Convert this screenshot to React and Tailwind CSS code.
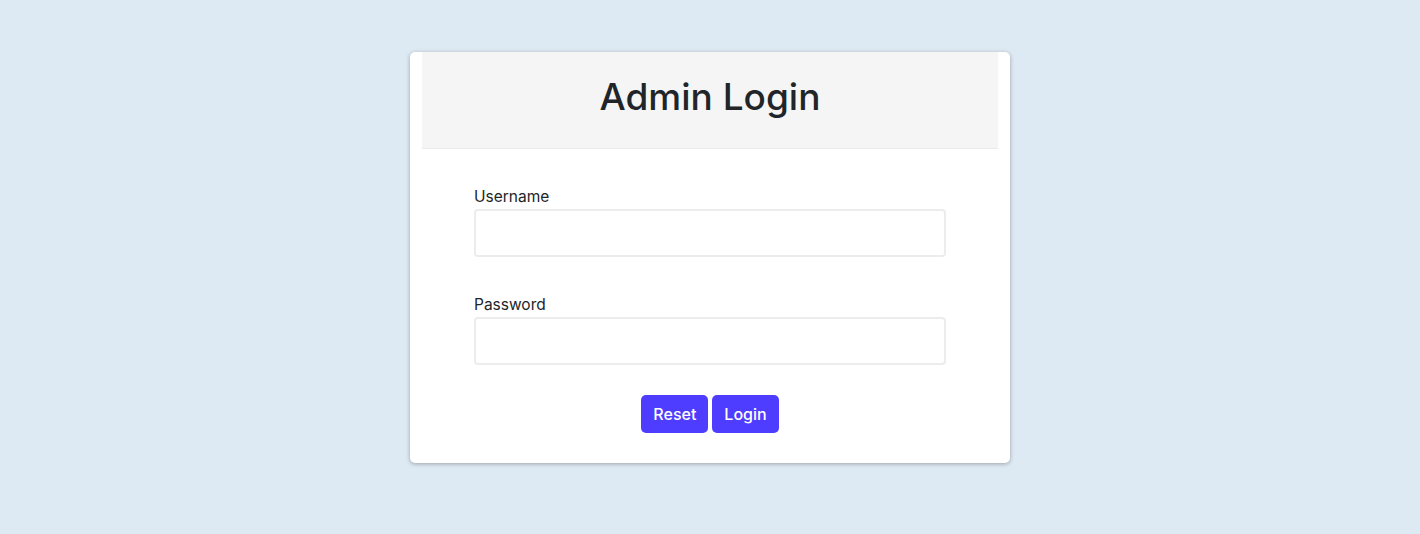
export default function App() {
  return (
    <div className="min-h-[534px] bg-[#dde9f3] flex justify-center pt-[52px] font-['Inter','Liberation_Sans',sans-serif]">
      <div className="w-[600px] h-[411px] bg-white rounded-[5px] shadow-[0_1px_4px_rgba(0,0,0,0.3)] px-3 flex flex-col">
        <div className="h-[97px] bg-[#f5f5f5] border-b border-[#ebebeb] flex items-center justify-center pb-[7px]">
          <h1 className="text-[37px] font-medium text-[#212529] leading-none">Admin Login</h1>
        </div>
        <form className="px-[52px] pt-[36px]" onSubmit={(e) => e.preventDefault()}>
          <label className="block text-[15.5px] leading-6 text-[#212529]">Username</label>
          <input type="text" className="block w-full h-[48px] border-2 border-[#ececec] rounded-[4px] mb-[36px] outline-none" />
          <label className="block text-[15.5px] leading-6 text-[#212529]">Password</label>
          <input type="password" className="block w-full h-[48px] border-2 border-[#ececec] rounded-[4px] outline-none" />
          <div className="flex justify-center gap-1 mt-[30px]">
            <button type="reset" className="h-[38px] px-3 bg-[#4f3dff] text-white text-base font-medium rounded-[5px]">Reset</button>
            <button type="submit" className="h-[38px] px-3 bg-[#4f3dff] text-white text-base font-medium rounded-[5px]">Login</button>
          </div>
        </form>
      </div>
    </div>
  );
}
